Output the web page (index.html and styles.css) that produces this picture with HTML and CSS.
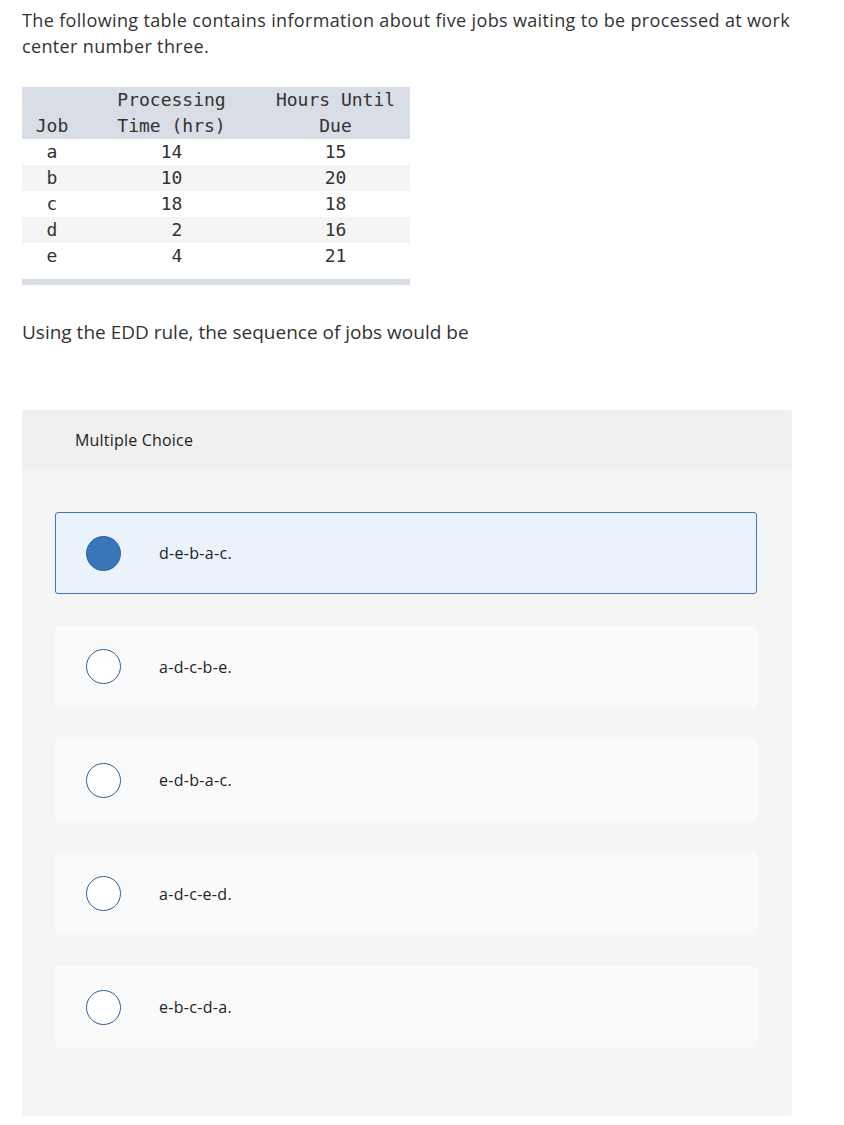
FILE: index.html
```html
<!DOCTYPE html>
<html>
<head>
<meta charset="utf-8">
<link rel="stylesheet" href="styles.css">
</head>
<body>
<div class="page">
  <p class="intro">The following table contains information about five jobs waiting to be processed at work center number three.</p>

  <div class="table-wrap">
    <table class="jobs">
      <thead>
        <tr>
          <th class="c-job">Job</th>
          <th class="c-proc">Processing<br>Time (hrs)</th>
          <th class="c-due">Hours Until<br>Due</th>
        </tr>
      </thead>
      <tbody>
        <tr><td class="c-job">a</td><td class="c-proc">14</td><td class="c-due">15</td></tr>
        <tr class="alt"><td class="c-job">b</td><td class="c-proc">10</td><td class="c-due">20</td></tr>
        <tr><td class="c-job">c</td><td class="c-proc">18</td><td class="c-due">18</td></tr>
        <tr class="alt"><td class="c-job">d</td><td class="c-proc">&nbsp;2</td><td class="c-due">16</td></tr>
        <tr><td class="c-job">e</td><td class="c-proc">&nbsp;4</td><td class="c-due">21</td></tr>
      </tbody>
    </table>
    <div class="table-foot"></div>
  </div>

  <p class="question">Using the EDD rule, the sequence of jobs would be</p>

  <div class="mc">
    <div class="mc-head">Multiple Choice</div>
    <div class="mc-body">
      <div class="option selected"><span class="radio"></span><span class="label">d-e-b-a-c.</span></div>
      <div class="option"><span class="radio"></span><span class="label">a-d-c-b-e.</span></div>
      <div class="option"><span class="radio"></span><span class="label">e-d-b-a-c.</span></div>
      <div class="option"><span class="radio"></span><span class="label">a-d-c-e-d.</span></div>
      <div class="option"><span class="radio"></span><span class="label">e-b-c-d-a.</span></div>
    </div>
  </div>
</div>
</body>
</html>
```

FILE: styles.css
```css
html, body {
  margin: 0;
  padding: 0;
  background: #ffffff;
}

.page {
  padding: 7px 52px 0 22px;
  font-family: "Open Sans", "Lato", "Liberation Sans", sans-serif;
  color: #333333;
}

.intro {
  margin: 0;
  font-size: 18px;
  letter-spacing: 0.35px;
  line-height: 26px;
  color: #333333;
}

.table-wrap {
  margin-top: 28px;
  width: 388px;
}

.jobs {
  border-collapse: collapse;
  width: 388px;
  font-family: "DejaVu Sans Mono", "Liberation Mono", monospace;
  font-size: 18px;
  color: #333333;
}

.jobs thead tr {
  background: #d9dde6;
}

.jobs th {
  font-weight: normal;
  line-height: 26px;
  vertical-align: bottom;
  padding: 0;
}

.jobs td {
  line-height: 26px;
  height: 26px;
  padding: 0;
}

.jobs .alt {
  background: #f5f5f5;
}

.c-job {
  width: 60px;
  text-align: center;
}

.c-proc {
  width: 179px;
  text-align: center;
}

.c-due {
  text-align: center;
}

.table-foot {
  margin-top: 10px;
  height: 6px;
  background: #d9dde6;
}

.question {
  margin: 34px 0 0 0;
  font-size: 19px;
  line-height: 26px;
  color: #333333;
}

.mc {
  margin-top: 65px;
  background: #f5f5f5;
  border-radius: 3px;
  padding-bottom: 68px;
}

.mc-head {
  background: #f0f0f0;
  height: 61px;
  line-height: 60px;
  padding-left: 53px;
  font-size: 16px;
  letter-spacing: 0.2px;
  color: #222222;
  border-radius: 3px 3px 0 0;
}

.mc-body {
  padding: 41px 35px 0 33px;
  display: flex;
  flex-direction: column;
  gap: 31.5px;
}

.option {
  height: 82px;
  box-sizing: border-box;
  background: #fafafa;
  border: 1px solid #fafafa;
  border-radius: 3px;
  display: flex;
  align-items: center;
  padding-left: 30px;
}

.option.selected {
  background: #eaf2fb;
  border-color: #3a76b8;
}

.radio {
  width: 35px;
  height: 35px;
  box-sizing: border-box;
  border-radius: 50%;
  border: 1.5px solid #2e5f97;
  background: #ffffff;
  flex: none;
}

.option.selected .radio {
  background: #3875b9;
  border-color: #2d65a3;
}

.label {
  margin-left: 38px;
  font-size: 16px;
  letter-spacing: 0.3px;
  color: #222222;
}
```
